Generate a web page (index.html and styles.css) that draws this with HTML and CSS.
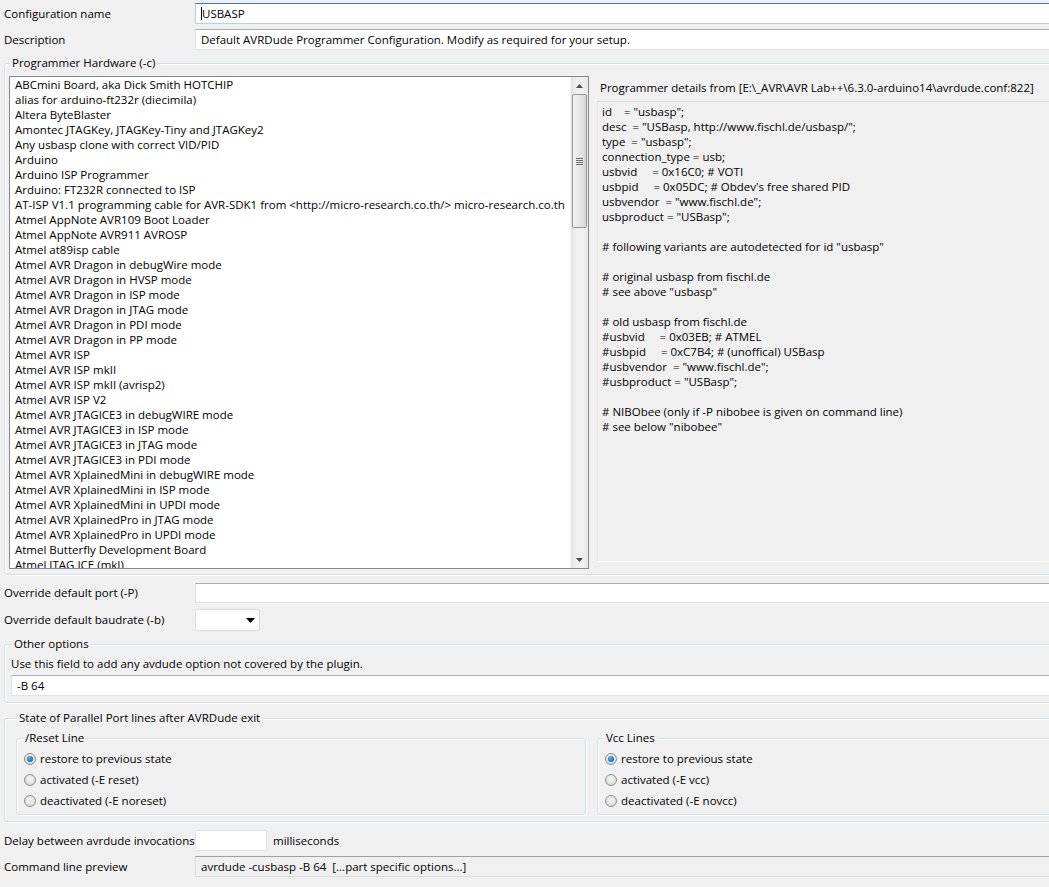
FILE: index.html
```html
<!DOCTYPE html>
<html lang="en">
<head>
    <meta charset="UTF-8">
    <title>AVRDude Programmer Configuration</title>
    <link rel="stylesheet" href="styles.css">
</head>
<body>
    <div class="page">
        <div class="row row-name">
            <label class="row-label" for="configName">Configuration name</label>
            <div class="text-field focused" id="configName"><span class="caret"></span>USBASP</div>
        </div>
        <div class="row row-desc">
            <label class="row-label">Description</label>
            <div class="text-field">Default AVRDude Programmer Configuration. Modify as required for your setup.</div>
        </div>

        <fieldset class="group group-hardware">
            <legend>Programmer Hardware (-c)</legend>
            <div class="hardware">
                <div class="listbox">
                    <ul class="list-items">
                        <li>ABCmini Board, aka Dick Smith HOTCHIP</li>
                        <li>alias for arduino-ft232r (diecimila)</li>
                        <li>Altera ByteBlaster</li>
                        <li>Amontec JTAGKey, JTAGKey-Tiny and JTAGKey2</li>
                        <li>Any usbasp clone with correct VID/PID</li>
                        <li>Arduino</li>
                        <li>Arduino ISP Programmer</li>
                        <li>Arduino: FT232R connected to ISP</li>
                        <li>AT-ISP V1.1 programming cable for AVR-SDK1 from &lt;http://micro-research.co.th/&gt; micro-research.co.th</li>
                        <li>Atmel AppNote AVR109 Boot Loader</li>
                        <li>Atmel AppNote AVR911 AVROSP</li>
                        <li>Atmel at89isp cable</li>
                        <li>Atmel AVR Dragon in debugWire mode</li>
                        <li>Atmel AVR Dragon in HVSP mode</li>
                        <li>Atmel AVR Dragon in ISP mode</li>
                        <li>Atmel AVR Dragon in JTAG mode</li>
                        <li>Atmel AVR Dragon in PDI mode</li>
                        <li>Atmel AVR Dragon in PP mode</li>
                        <li>Atmel AVR ISP</li>
                        <li>Atmel AVR ISP mkII</li>
                        <li>Atmel AVR ISP mkII (avrisp2)</li>
                        <li>Atmel AVR ISP V2</li>
                        <li>Atmel AVR JTAGICE3 in debugWIRE mode</li>
                        <li>Atmel AVR JTAGICE3 in ISP mode</li>
                        <li>Atmel AVR JTAGICE3 in JTAG mode</li>
                        <li>Atmel AVR JTAGICE3 in PDI mode</li>
                        <li>Atmel AVR XplainedMini in debugWIRE mode</li>
                        <li>Atmel AVR XplainedMini in ISP mode</li>
                        <li>Atmel AVR XplainedMini in UPDI mode</li>
                        <li>Atmel AVR XplainedPro in JTAG mode</li>
                        <li>Atmel AVR XplainedPro in UPDI mode</li>
                        <li>Atmel Butterfly Development Board</li>
                        <li>Atmel JTAG ICE (mkI)</li>
                    </ul>
                    <div class="scrollbar">
                        <div class="scroll-btn">
                            <svg width="7" height="4" viewBox="0 0 7 4"><path d="M0 4 L3.5 0 L7 4 Z" fill="#4d4d4d"/></svg>
                        </div>
                        <div class="scroll-track">
                            <div class="scroll-thumb">
                                <span class="grip"></span>
                            </div>
                        </div>
                        <div class="scroll-btn">
                            <svg width="7" height="4" viewBox="0 0 7 4"><path d="M0 0 L7 0 L3.5 4 Z" fill="#4d4d4d"/></svg>
                        </div>
                    </div>
                </div>
                <div class="details">
                    <div class="details-label">Programmer details from [E:\_AVR\AVR Lab++\6.3.0-arduino14\avrdude.conf:822]</div>
                    <pre class="details-text">id    = "usbasp";
desc  = "USBasp, http://www.fischl.de/usbasp/";
type  = "usbasp";
connection_type = usb;
usbvid     = 0x16C0; # VOTI
usbpid     = 0x05DC; # Obdev's free shared PID
usbvendor  = "www.fischl.de";
usbproduct = "USBasp";

# following variants are autodetected for id "usbasp"

# original usbasp from fischl.de
# see above "usbasp"

# old usbasp from fischl.de
#usbvid     = 0x03EB; # ATMEL
#usbpid     = 0xC7B4; # (unoffical) USBasp
#usbvendor  = "www.fischl.de";
#usbproduct = "USBasp";

# NIBObee (only if -P nibobee is given on command line)
# see below "nibobee"</pre>
                </div>
            </div>
        </fieldset>

        <div class="row row-port">
            <label class="row-label">Override default port (-P)</label>
            <div class="text-field"></div>
        </div>
        <div class="row row-baud">
            <label class="row-label">Override default baudrate (-b)</label>
            <div class="combo">
                <svg width="9" height="5" viewBox="0 0 9 5"><path d="M0 0 L9 0 L4.5 5 Z" fill="#000"/></svg>
            </div>
        </div>

        <fieldset class="group group-other">
            <legend>Other options</legend>
            <p class="hint">Use this field to add any avdude option not covered by the plugin.</p>
            <div class="text-field">-B 64</div>
        </fieldset>

        <fieldset class="group group-exit">
            <legend>State of Parallel Port lines after AVRDude exit</legend>
            <div class="exit-columns">
                <fieldset class="group inner">
                    <legend>/Reset Line</legend>
                    <div class="radio checked"><span class="dot"></span>restore to previous state</div>
                    <div class="radio"><span class="dot"></span>activated (-E reset)</div>
                    <div class="radio"><span class="dot"></span>deactivated (-E noreset)</div>
                </fieldset>
                <fieldset class="group inner">
                    <legend>Vcc Lines</legend>
                    <div class="radio checked"><span class="dot"></span>restore to previous state</div>
                    <div class="radio"><span class="dot"></span>activated (-E vcc)</div>
                    <div class="radio"><span class="dot"></span>deactivated (-E novcc)</div>
                </fieldset>
            </div>
        </fieldset>

        <div class="row row-delay">
            <label class="row-label">Delay between avrdude invocations</label>
            <div class="text-field small"></div>
            <span class="unit">milliseconds</span>
        </div>
        <div class="row row-cmd">
            <label class="row-label">Command line preview</label>
            <div class="text-field readonly">avrdude -cusbasp -B 64&nbsp; [...part specific options...]</div>
        </div>
    </div>
</body>
</html>
```
FILE: styles.css
```css
html, body {
    margin: 0;
    padding: 0;
}
body {
    background-color: #f0f0f0;
    font-family: "Open Sans", "Liberation Sans", sans-serif;
    font-size: 11.5px;
    color: #000;
    overflow: hidden;
    width: 1049px;
    height: 887px;
}
.page {
    width: 1170px;
    padding: 3px 0 0 4px;
}

/* label + field rows */
.row {
    display: flex;
    align-items: center;
}
.row-label {
    width: 191px;
    flex: none;
    line-height: 16px;
}
.row-name { height: 21px; }
.row-desc { height: 21px; margin-top: 5px; }
.row-port { height: 20px; margin-top: 8px; }
.row-baud { height: 22px; margin-top: 6px; }
.row-delay { height: 21px; margin-top: 8px; }
.row-cmd { height: 21px; margin-top: 5px; }

.text-field {
    flex: 1;
    align-self: stretch;
    box-sizing: border-box;
    background: #fff;
    border: 1px solid #e2e3ea;
    border-top-color: #abadb3;
    padding: 0 5px;
    display: flex;
    align-items: center;
    white-space: nowrap;
}
.text-field.focused {
    border-color: #b5cfe7;
    border-top-color: #3d7bad;
}
.text-field.small {
    flex: none;
    width: 72px;
    border-color: #e2e3ea;
    border-radius: 2px;
}
.text-field.readonly {
    background: #f0f0f0;
    border-color: #dcdcdc;
    border-top-color: #a0a0a0;
}
.caret {
    width: 1px;
    height: 13px;
    background: #000;
}
.unit {
    margin-left: 6px;
}
.combo {
    width: 65px;
    height: 22px;
    box-sizing: border-box;
    background: #fff;
    border: 1px solid #dcdde3;
    border-radius: 2px;
    display: flex;
    align-items: center;
    justify-content: flex-end;
    padding-right: 4px;
}

/* group boxes */
.group {
    margin: 0;
    min-width: 0;
    border: 1px solid #d5dfe5;
    border-radius: 3px;
    box-shadow: inset 1px 1px 0 #fff, 1px 1px 0 #fff;
}
.group legend {
    padding: 0 2px;
    margin-left: 1px;
    line-height: 16px;
    background: #f0f0f0;
}
.group-hardware {
    margin-top: 5px;
    padding: 5px 4px 5px 4px;
}
.group-other {
    margin-top: 5px;
    padding: 4px 0 6px 6px;
}
.group-exit {
    margin-top: 7px;
    padding: 4px 0 6px 11px;
}

/* programmer list */
.hardware {
    display: flex;
}
.listbox {
    width: 580px;
    height: 493px;
    box-sizing: border-box;
    border: 1px solid #828790;
    background: #fff;
    display: flex;
}
.list-items {
    flex: 1;
    min-width: 0;
    margin: 0;
    padding: 0 0 0 5px;
    list-style: none;
    overflow: hidden;
}
.list-items li {
    line-height: 15px;
    white-space: nowrap;
}
.scrollbar {
    width: 17px;
    flex: none;
    display: flex;
    flex-direction: column;
    background: linear-gradient(to right, #e3e3e3, #f0f0f0 30%, #f0f0f0 70%, #e8e8e8);
    border-left: 1px solid #f4f4f4;
}
.scroll-btn {
    height: 17px;
    display: flex;
    align-items: center;
    justify-content: center;
}
.scroll-track {
    flex: 1;
}
.scroll-thumb {
    margin: 0 1px;
    height: 134px;
    box-sizing: border-box;
    border: 1px solid #979797;
    border-radius: 2px;
    background: linear-gradient(to right, #f2f2f2, #e6e6e6 50%, #d7d7d7);
    display: flex;
    align-items: center;
    justify-content: center;
}
.grip {
    width: 7px;
    height: 7px;
    background: repeating-linear-gradient(to bottom, #6e6e6e 0, #6e6e6e 1px, transparent 1px, transparent 2px);
}

/* details */
.details {
    flex: 1;
    margin-left: 8px;
    display: flex;
    flex-direction: column;
}
.details-label {
    margin-top: 4px;
    padding-left: 3px;
    line-height: 16px;
    white-space: nowrap;
}
.details-text {
    margin: 5px 0 0 0;
    height: 461px;
    box-sizing: border-box;
    border: 1px solid #d9d9d9;
    border-bottom-color: #fff;
    border-left-color: #e6e6e6;
    padding: 2px 0 0 4px;
    font-family: inherit;
    font-size: inherit;
    line-height: 15px;
    white-space: pre;
}

/* other options */
.hint {
    margin: 0 0 3px 0;
    line-height: 16px;
}
.group-other .text-field {
    height: 21px;
}

/* exit state */
.exit-columns {
    display: grid;
    grid-template-columns: 570px 570px;
    column-gap: 11px;
}
.group.inner {
    padding: 2px 0 3px 5px;
}
.radio {
    height: 21px;
    display: flex;
    align-items: center;
    margin-left: 2px;
}
.dot {
    width: 12px;
    height: 12px;
    box-sizing: border-box;
    border: 1px solid #8e8f8f;
    border-radius: 50%;
    background: radial-gradient(circle at 50% 40%, #f6f6f6, #dcdcdc 70%, #cfcfcf);
    margin-right: 4px;
    display: flex;
    align-items: center;
    justify-content: center;
}
.radio.checked .dot::after {
    content: "";
    width: 6px;
    height: 6px;
    border-radius: 50%;
    background: radial-gradient(circle at 40% 35%, #5fb6ea, #136aa8 70%, #0b4f82);
}
```
